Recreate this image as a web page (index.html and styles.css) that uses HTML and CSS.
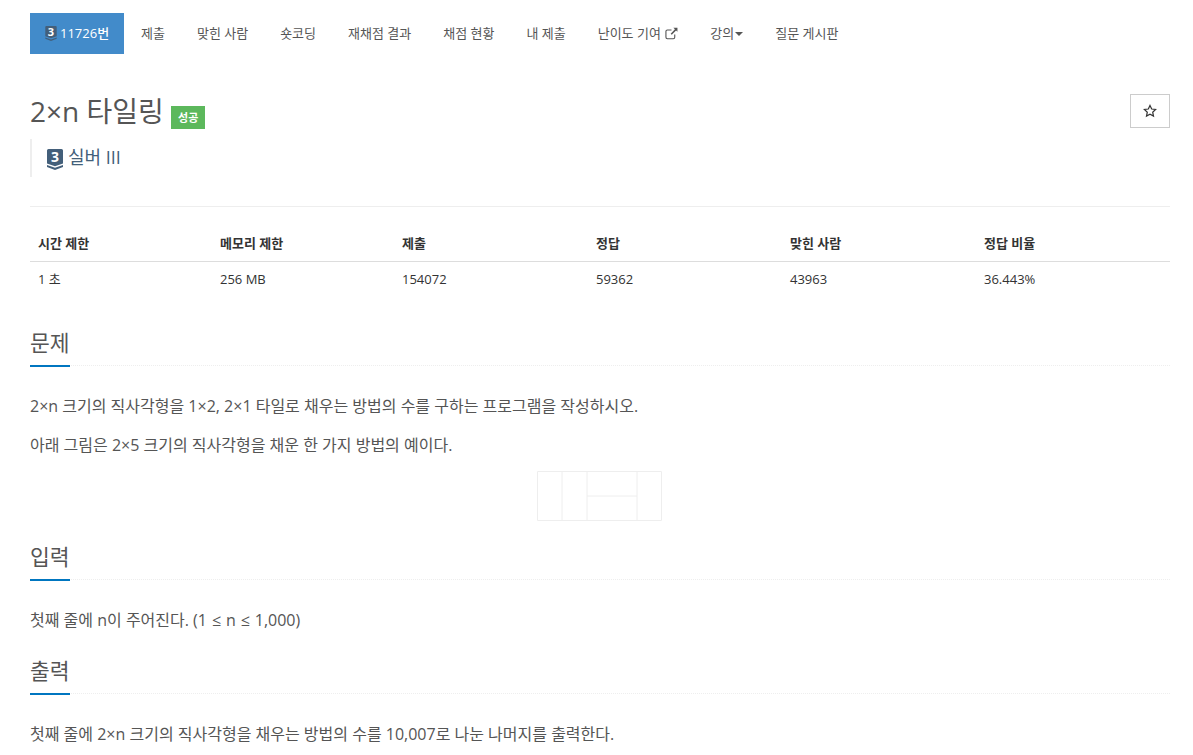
FILE: index.html
```html
<!DOCTYPE html>
<html lang="ko">
<head>
<meta charset="utf-8">
<title>2×n 타일링</title>
<link rel="stylesheet" href="styles.css">
</head>
<body>
<svg class="defs" width="0" height="0" aria-hidden="true">
  <symbol id="tier" viewBox="0 0 16 21">
    <path d="M0 1.5A1.5 1.5 0 0 1 1.5 0h13A1.5 1.5 0 0 1 16 1.5V14.5l-8 2.7-8-2.7z" fill="#435f7a"/>
    <path d="M0 16l8 2.8L16 16v2l-8 3-8-3z" fill="#435f7a"/>
  </symbol>
</svg>
<main class="page">
  <nav class="tabs">
    <a class="tab tab-active"><span class="badge-wrap"><svg class="tier-sm"><use href="#tier"/></svg><span class="tier-num tier-num-sm">3</span></span>11726번</a>
    <a class="tab">제출</a>
    <a class="tab">맞힌 사람</a>
    <a class="tab">숏코딩</a>
    <a class="tab">재채점 결과</a>
    <a class="tab">채점 현황</a>
    <a class="tab">내 제출</a>
    <a class="tab">난이도 기여 <svg class="ext" viewBox="0 0 14 14"><path d="M10.5 8v3a1.6 1.6 0 0 1-1.6 1.6H2.6A1.6 1.6 0 0 1 1 11V4.8a1.6 1.6 0 0 1 1.6-1.6H7" fill="none" stroke="#555" stroke-width="1.2"/><path d="M9 .8h4.4v4.4l-1.5-1.5-4.6 4.7-1.2-1.2 4.6-4.7z" fill="#555"/></svg></a>
    <a class="tab">강의<span class="caret"></span></a>
    <a class="tab">질문 게시판</a>
  </nav>

  <header class="title-row">
    <div>
      <h1 class="title">2×n 타일링 <span class="label">성공</span></h1>
      <blockquote class="tier-line"><span class="badge-wrap"><svg class="tier-lg"><use href="#tier"/></svg><span class="tier-num tier-num-lg">3</span></span>실버 III</blockquote>
    </div>
    <button class="star" aria-label="즐겨찾기"><svg class="star-icon" viewBox="0 0 14 14"><path d="M7 1.4l1.7 3.6 3.9.5-2.9 2.7.8 3.9L7 10.2l-3.5 1.9.8-3.9-2.9-2.7 3.9-.5z" fill="none" stroke="#333" stroke-width="1.2"/></svg></button>
  </header>

  <hr class="rule">

  <table class="stats">
    <thead>
      <tr><th class="c1">시간 제한</th><th class="c1">메모리 제한</th><th>제출</th><th>정답</th><th>맞힌 사람</th><th>정답 비율</th></tr>
    </thead>
    <tbody>
      <tr><td>1 초</td><td>256 MB</td><td>154072</td><td>59362</td><td>43963</td><td>36.443%</td></tr>
    </tbody>
  </table>

  <section class="section section-problem">
    <h2 class="head"><span class="head-text">문제</span></h2>
    <p class="para">2×n 크기의 직사각형을 1×2, 2×1 타일로 채우는 방법의 수를 구하는 프로그램을 작성하시오.</p>
    <p class="para para-next">아래 그림은 2×5 크기의 직사각형을 채운 한 가지 방법의 예이다.</p>
    <div class="figure">
      <svg class="tiles" viewBox="0 0 125 50">
        <path d="M.5 .5h124v49H.5zM25 .5v49M50 .5v49M100 .5v49M50 25h50" fill="none" stroke="#eee" stroke-width="1"/>
      </svg>
    </div>
  </section>

  <section class="section section-input">
    <h2 class="head"><span class="head-text">입력</span></h2>
    <p class="para">첫째 줄에 n이 주어진다. (1 <span class="leq">≤</span> n <span class="leq">≤</span> 1,000)</p>
  </section>

  <section class="section section-output">
    <h2 class="head"><span class="head-text">출력</span></h2>
    <p class="para">첫째 줄에 2×n 크기의 직사각형을 채우는 방법의 수를 10,007로 나눈 나머지를 출력한다.</p>
  </section>
</main>
</body>
</html>
```
FILE: styles.css
```css
* { box-sizing: border-box; }
html, body { margin: 0; height: 755px; overflow: hidden; background: #fff; }
body {
  font-family: "Open Sans", "Noto Sans CJK KR", sans-serif;
  font-size: 14px;
  line-height: 1.43;
  color: #333;
}
.defs { display: block; height: 0; }
.page { padding: 13px 23px 0 30px; }

.tabs { display: flex; height: 41px; }
.tab {
  display: flex;
  align-items: center;
  padding: 0 16px;
  font-size: 13px;
  color: #555;
  white-space: pre;
}
.tab-active { width: 94px; margin-right: 1px; background: #428bca; color: #fff; padding: 0 15px; font-weight: 500; }
.badge-wrap { position: relative; display: inline-block; line-height: 0; }
.tier-sm { width: 12px; height: 15px; margin-right: 3px; }
.tier-lg { width: 16px; height: 21px; margin-right: 5px; }
.tier-num { position: absolute; left: 0; color: #fff; font-weight: 700; text-align: center; line-height: 1; }
.tier-num-sm { width: 12px; top: 0; font-size: 11px; }
.tier-num-lg { width: 16px; top: 1px; font-size: 14px; }
.ext { width: 13px; height: 13px; margin-left: 1px; }
.caret {
  width: 0; height: 0; margin-left: 1px;
  border-top: 4px solid #555;
  border-left: 4px solid transparent;
  border-right: 4px solid transparent;
}

.title-row { display: flex; justify-content: space-between; margin-top: 40px; }
.title { margin: 0; font-size: 28px; font-weight: 400; line-height: 34px; color: #555; }
.label {
  display: inline-block;
  vertical-align: 0;
  height: 23px;
  padding: 0 7px;
  background: #5cb85c;
  color: #fff;
  font-size: 11px;
  font-weight: 600;
  line-height: 24px;
}
.tier-line {
  display: flex;
  align-items: center;
  height: 38px;
  margin: 10px 0 0;
  padding-left: 15px;
  border-left: 2px solid #eee;
  font-size: 18px;
  color: #435f7a;
}
.tier-line .badge-wrap { margin-top: 2px; }
.star {
  width: 40px; height: 34px; padding: 0;
  background: #fff;
  border: 1px solid #ccc;
  display: flex; align-items: center; justify-content: center;
}
.star-icon { width: 14px; height: 14px; margin-right: 1px; }

.rule { height: 1px; margin: 29px 0 0; border: 0; background: #eee; }

.stats { width: 100%; margin-top: 21px; border-collapse: collapse; table-layout: fixed; font-size: 13px; }
.stats th { width: 194px; height: 33px; padding: 0 8px 2px; text-align: left; font-weight: 700; color: #333; border-bottom: 1px solid #ddd; }
.stats th.c1 { width: 182px; }
.stats td { height: 35px; padding: 1px 8px 0; }

.head { margin: 0; height: 38px; font-size: 21.5px; font-weight: 400; line-height: 30px; color: #555; border-bottom: 1px dotted #eee; }
.head-text { display: inline-block; height: 39px; width: 40px; border-bottom: 2px solid #0076c0; }
.para { margin: 29px 0 0; font-size: 16px; line-height: 22px; color: #555; }
.para-next { margin-top: 17px; }
.leq { margin: 0 .75px; }
.figure { display: flex; justify-content: center; margin-top: 15px; }
.tiles { width: 125px; height: 50px; display: block; margin-right: 1px; }
.section-problem { margin-top: 32px; }
.section-input { margin-top: 21px; }
.section-output { margin-top: 25px; }
```
